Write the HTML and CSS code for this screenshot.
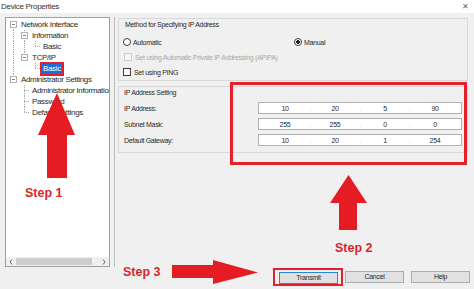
FILE: index.html
```html
<!DOCTYPE html>
<html>
<head>
<meta charset="utf-8">
<title>Device Properties</title>
<link rel="stylesheet" href="styles.css">
</head>
<body>
<div class="window">
  <div class="titlebar">
    <span class="title">Device Properties</span>
    <span class="close">✕</span>
  </div>
  <div class="main">
    <div class="tree">
      <div class="tree-list">
        <div class="node"><span class="cell exp down"></span><span class="label">Network Interface</span></div>
        <div class="node"><span class="cell vline"></span><span class="cell exp up down"></span><span class="label">Information</span></div>
        <div class="node"><span class="cell vline"></span><span class="cell vline"></span><span class="cell elbow"></span><span class="label">Basic</span></div>
        <div class="node"><span class="cell vline"></span><span class="cell exp up"></span><span class="label">TCP/IP</span></div>
        <div class="node"><span class="cell vline"></span><span class="cell"></span><span class="cell elbow"></span><span class="label sel">Basic</span></div>
        <div class="node"><span class="cell exp up"></span><span class="label">Administrator Settings</span></div>
        <div class="node"><span class="cell"></span><span class="cell tee"></span><span class="label">Administrator Information</span></div>
        <div class="node"><span class="cell"></span><span class="cell tee"></span><span class="label">Password</span></div>
        <div class="node"><span class="cell"></span><span class="cell elbow"></span><span class="label">Default Settings</span></div>
      </div>
      <div class="hscroll">
        <span class="sarrow"><svg width="4" height="6" viewBox="0 0 4 6"><polyline points="3,0.5 1,3 3,5.5" fill="none" stroke="#606060" stroke-width="1"/></svg></span>
        <span class="thumb"></span>
        <span class="spacer"></span>
        <span class="sarrow"><svg width="4" height="6" viewBox="0 0 4 6"><polyline points="1,0.5 3,3 1,5.5" fill="none" stroke="#606060" stroke-width="1"/></svg></span>
      </div>
    </div>
    <div class="panel">
      <div class="group g1">
        <div class="legend">Method for Specifying IP Address</div>
        <div class="radio-row">
          <label class="opt"><span class="radio"></span><span>Automatic</span></label>
          <label class="opt"><span class="radio on"></span><span>Manual</span></label>
        </div>
        <div class="check-row disabled">
          <span class="check"></span><span>Set using Automatic Private IP Addressing (APIPA)</span>
        </div>
        <div class="check-row">
          <span class="check"></span><span>Set using PING</span>
        </div>
      </div>
      <div class="group g2">
        <div class="legend">IP Address Setting</div>
        <div class="ip-row">
          <span class="ip-label">IP Address:</span>
          <div class="ip-field"><span class="oct">10</span><span class="dot">.</span><span class="oct">20</span><span class="dot">.</span><span class="oct">5</span><span class="dot">.</span><span class="oct">90</span></div>
        </div>
        <div class="ip-row">
          <span class="ip-label">Subnet Mask:</span>
          <div class="ip-field"><span class="oct">255</span><span class="dot">.</span><span class="oct">255</span><span class="dot">.</span><span class="oct">0</span><span class="dot">.</span><span class="oct">0</span></div>
        </div>
        <div class="ip-row">
          <span class="ip-label">Default Gateway:</span>
          <div class="ip-field"><span class="oct">10</span><span class="dot">.</span><span class="oct">20</span><span class="dot">.</span><span class="oct">1</span><span class="dot">.</span><span class="oct">254</span></div>
        </div>
      </div>
    </div>
  </div>
  <div class="footer">
    <span class="hl-wrap"><button class="btn primary">Transmit</button></span>
    <button class="btn cancel">Cancel</button>
    <button class="btn help">Help</button>
  </div>

  <div class="redbox"></div>
  <svg class="arrow a1" width="37" height="85" viewBox="0 0 37 85"><polygon points="19,0 37,42 29,42 29,85 9,85 9,42 0,42"/></svg>
  <svg class="arrow a2" width="37" height="55" viewBox="0 0 37 55"><polygon points="18.5,0 37,28 27,28 27,55 9,55 9,28 0,28"/></svg>
  <svg class="arrow a3" width="86" height="24" viewBox="0 0 86 24"><polygon points="0,5 41,5 41,0 86,12.5 41,24 41,18 0,18"/></svg>
  <div class="step s1">Step 1</div>
  <div class="step s2">Step 2</div>
  <div class="step s3">Step 3</div>
</div>
</body>
</html>
```

FILE: styles.css
```css
html, body {
  margin: 0;
  padding: 0;
  background: #ffffff;
}
body {
  font-family: "Liberation Sans", Arial, sans-serif;
  color: #2a2a2a;
}
.window {
  position: relative;
  width: 474px;
  height: 289px;
  background: #f0f0f0;
  overflow: hidden;
  display: flex;
  flex-direction: column;
}
.titlebar {
  height: 13px;
  flex: none;
  background: #ffffff;
  display: flex;
  justify-content: space-between;
  align-items: center;
  padding: 0 5px 0 1px;
  box-sizing: border-box;
  font-size: 8px;
  letter-spacing: -0.3px;
  color: #333;
}
.close {
  font-size: 8px;
  color: #666;
}
.main {
  display: flex;
  gap: 4px;
  padding: 4px 3px 0 5px;
  height: 254px;
  flex: none;
  box-sizing: border-box;
}
/* tree */
.tree {
  width: 105px;
  height: 250px;
  box-sizing: border-box;
  background: #ffffff;
  border: 1px solid #a0a0a0;
  display: flex;
  flex-direction: column;
}
.tree-list {
  flex: 1;
  padding: 1px 0 0 2px;
  overflow: hidden;
}
.node {
  display: flex;
  align-items: center;
  height: 11px;
  white-space: nowrap;
}
.cell {
  flex: none;
  width: 11px;
  height: 11px;
  display: flex;
  align-items: center;
  justify-content: center;
  background-repeat: no-repeat;
  --v: repeating-linear-gradient(to bottom, #a8a8a8 0 1px, transparent 1px 2px);
  --h: repeating-linear-gradient(to right, #a8a8a8 0 1px, transparent 1px 2px);
}
.cell.vline {
  background-image: var(--v);
  background-position: 5px 0;
  background-size: 1px 11px;
}
.cell.tee {
  background-image: var(--v), var(--h);
  background-position: 5px 0, 5px 5px;
  background-size: 1px 11px, 6px 1px;
}
.cell.elbow {
  background-image: var(--v), var(--h);
  background-position: 5px 0, 5px 5px;
  background-size: 1px 6px, 6px 1px;
}
.cell.exp.down {
  background-image: var(--v);
  background-position: 5px 6px;
  background-size: 1px 5px;
}
.cell.exp.up {
  background-image: var(--v);
  background-position: 5px 0;
  background-size: 1px 5px;
}
.cell.exp.up.down {
  background-image: var(--v);
  background-position: 5px 0;
  background-size: 1px 11px;
}
.cell.exp::before {
  content: "";
  width: 5px;
  height: 5px;
  border: 1px solid #b0b0b0;
  background: #ffffff linear-gradient(#808080, #808080) no-repeat 1px 2px / 3px 1px;
}
.label {
  margin-left: 2px;
  font-size: 8px;
  line-height: 10px;
  letter-spacing: -0.35px;
  color: #2a2a2a;
}
.label.sel {
  margin-left: 1px;
  padding: 0 1px;
  background: #1d6fd8;
  color: #ffffff;
  outline: 2px solid #e3202b;
  outline-offset: 0;
}
.hscroll {
  height: 9px;
  flex: none;
  display: flex;
  align-items: center;
  background: #f0f0f0;
}
.sarrow {
  width: 10px;
  height: 9px;
  display: flex;
  align-items: center;
  justify-content: center;
  flex: none;
}
.thumb {
  width: 76px;
  height: 7px;
  background: #cdcdcd;
  flex: none;
}
.spacer {
  flex: 1;
}
/* right panel */
.panel {
  flex: 1;
  border-left: 1px solid #bdbdbd;
  padding: 1px 3px 0 3px;
  display: flex;
  flex-direction: column;
  font-size: 7px;
  letter-spacing: -0.3px;
  color: #2a2a2a;
}
.group {
  border: 1px solid #d9d9d9;
  box-sizing: border-box;
  display: flex;
  flex-direction: column;
}
.g1 {
  height: 63px;
  padding: 0 4px 0 4px;
}
.g2 {
  height: 67px;
  margin-top: 5px;
  padding: 0 4px 0 5px;
}
.legend {
  line-height: 12px;
  height: 12px;
}
.g1 .legend {
  margin-left: 2px;
}
.radio-row {
  margin-top: 5px;
  height: 12px;
  display: grid;
  grid-template-columns: 171px auto;
  align-items: center;
}
.opt {
  display: flex;
  align-items: center;
  gap: 2px;
}
.radio {
  width: 6px;
  height: 6px;
  border: 1px solid #3a3a3a;
  border-radius: 50%;
  background: #ffffff;
  flex: none;
}
.radio.on {
  background: radial-gradient(circle, #222 0 1.6px, #ffffff 2.1px);
}
.check-row {
  margin-top: 3px;
  height: 12px;
  display: flex;
  align-items: center;
  gap: 3px;
}
.check {
  width: 6px;
  height: 6px;
  border: 1px solid #3a3a3a;
  background: #ffffff;
  flex: none;
}
.check-row.disabled {
  color: #a8a8a8;
  padding-left: 1px;
}
.check-row.disabled .check {
  border-color: #cccccc;
  background: #f5f5f5;
}
.ip-row {
  display: flex;
  align-items: center;
  height: 12px;
  margin-top: 4px;
}
.legend + .ip-row {
  margin-top: 3px;
}
.ip-label {
  width: 134px;
  flex: none;
}
.ip-field {
  width: 204px;
  height: 12px;
  box-sizing: border-box;
  border: 1px solid #b0b0b0;
  background: #ffffff;
  display: flex;
  align-items: center;
  padding-left: 4px;
}
.oct {
  width: 44px;
  text-align: center;
  flex: none;
}
.dot {
  width: 6px;
  text-align: center;
  color: #b0b0b0;
  flex: none;
}
/* footer */
.footer {
  margin-top: 1px;
  height: 18px;
  display: flex;
  justify-content: flex-end;
  align-items: center;
  padding-right: 4px;
}
.hl-wrap {
  display: flex;
  border: 2px solid #e3202b;
  padding: 2px 3px 0 4px;
}
.btn {
  width: 59px;
  height: 12px;
  box-sizing: border-box;
  padding: 0;
  margin: 0;
  background: #e1e1e1;
  border: 1px solid #adadad;
  font-family: "Liberation Sans", Arial, sans-serif;
  font-size: 7px;
  letter-spacing: -0.3px;
  color: #2a2a2a;
  line-height: 10px;
}
.btn.primary {
  border-color: #2a84d8;
}
.btn.cancel {
  margin-left: 2px;
}
.btn.help {
  margin-left: 7px;
}
/* annotations */
.redbox {
  position: absolute;
  left: 230px;
  top: 82px;
  width: 237px;
  height: 83px;
  box-sizing: border-box;
  border: 3px solid #e3202b;
}
.arrow {
  position: absolute;
  fill: #e51c24;
}
.a1 { left: 38px; top: 93px; }
.a2 { left: 330px; top: 175px; }
.a3 { left: 172px; top: 260px; }
.step {
  position: absolute;
  font-family: "Liberation Sans", Arial, sans-serif;
  font-weight: bold;
  font-size: 12.5px;
  line-height: 14px;
  color: #d6262e;
  white-space: nowrap;
}
.s1 { left: 25px; top: 186px; }
.s2 { left: 335px; top: 241px; }
.s3 { left: 123px; top: 265px; }
```
